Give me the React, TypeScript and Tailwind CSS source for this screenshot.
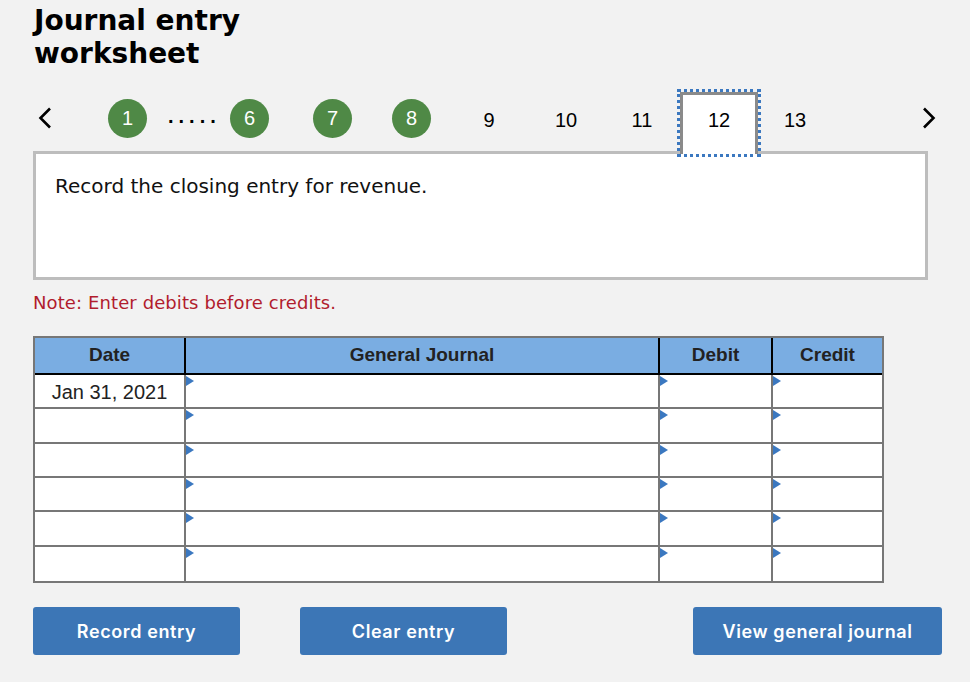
import React from 'react';

const Chevron = ({ dir }: { dir: 'left' | 'right' }) => (
  <svg width="14" height="22" viewBox="0 0 14 22" className="shrink-0">
    <polyline
      points={dir === 'left' ? '12,1.5 2.5,11 12,20.5' : '2,1.5 11.5,11 2,20.5'}
      fill="none"
      stroke="#000"
      strokeWidth="2.6"
    />
  </svg>
);

const Done = ({ n, className = '' }: { n: number; className?: string }) => (
  <div
    className={`w-[39px] h-[39px] shrink-0 rounded-full bg-[#4f8946] text-white flex items-center justify-center text-[20px] font-['Liberation_Sans',Arial,sans-serif] ${className}`}
  >
    {n}
  </div>
);

const Step = ({ n, className = '' }: { n: number; className?: string }) => (
  <div
    className={`w-[74px] shrink-0 pt-[3px] text-center text-[20px] text-black font-['Liberation_Sans',Arial,sans-serif] ${className}`}
  >
    {n}
  </div>
);

const Marker = () => (
  <span className="absolute left-0 top-[1px] w-0 h-0 border-y-[5px] border-y-transparent border-l-[8px] border-l-[#3b78c0]" />
);

const rows = ['Jan 31, 2021', '', '', '', '', ''];

export default function App() {
  return (
    <div className="min-h-[682px] w-[970px] bg-[#f2f2f2] px-[33px] pt-[4px] font-['DejaVu_Sans',Verdana,sans-serif]">
      <h1 className="text-[28px] leading-[33px] font-bold text-black pl-[1px]">
        Journal entry
        <br />
        worksheet
      </h1>

      {/* step navigation */}
      <div className="mt-[22px] mb-[7px] -ml-[33px] h-[52px] flex items-center">
        <div className="ml-[38px]">
          <Chevron dir="left" />
        </div>
        <Done n={1} className="ml-[56px]" />
        <div className="ml-[21px] w-[49px] shrink-0 text-[20px] font-bold tracking-[5px] leading-none pb-[4px] font-['Liberation_Sans',Arial,sans-serif]">
          .....
        </div>
        <Done n={6} className="ml-[13px]" />
        <Done n={7} className="ml-[44px]" />
        <Done n={8} className="ml-[40px]" />
        <Step n={9} className="ml-[21px]" />
        <Step n={10} className="ml-[3px]" />
        <Step n={11} className="ml-[2px]" />
        <div className="relative z-10 self-start ml-[1px] w-[78px] h-[62px] shrink-0 bg-white border-[3px] border-b-0 border-[#8a8a8a] outline-[3px] outline-dotted outline-[#3b78c0] pt-[10px] text-center text-[20px] text-black font-['Liberation_Sans',Arial,sans-serif]">
          12
        </div>
        <Step n={13} />
        <div className="ml-[90px]">
          <Chevron dir="right" />
        </div>
      </div>

      {/* prompt */}
      <div className="w-[895px] h-[129px] bg-white border-[3px] border-[#bdbdbd] pl-[19px] pt-[20px] text-[20px] leading-[24px] text-[#111]">
        Record the closing entry for revenue.
      </div>

      <p className="mt-[12px] text-[18px] tracking-[0.1px] leading-[22px] text-[#b11c2d]">Note: Enter debits before credits.</p>

      {/* journal table */}
      <div className="mt-[22px] w-[851px] border-2 border-[#777] bg-white font-['Liberation_Sans',Arial,sans-serif]">
        <div className="flex h-[37px] bg-[#7aade2] border-b-2 border-black text-[19px] font-bold text-[#222]">
          <div className="w-[149px] flex items-center justify-center">Date</div>
          <div className="w-[474px] border-l-2 border-black flex items-center justify-center">General Journal</div>
          <div className="w-[113px] border-l-2 border-black flex items-center justify-center">Debit</div>
          <div className="w-[111px] border-l-2 border-black flex items-center justify-center">Credit</div>
        </div>
        {rows.map((date, i) => (
          <div
            key={i}
            className={`flex h-[34.35px] ${i < rows.length - 1 ? 'border-b-2 border-[#777]' : ''}`}
          >
            <div className="w-[149px] flex items-center justify-center pt-[2px] text-[20px] text-[#222]">{date}</div>
            <div className="relative w-[474px] border-l-2 border-[#777]">
              <Marker />
            </div>
            <div className="relative w-[113px] border-l-2 border-[#777]">
              <Marker />
            </div>
            <div className="relative w-[111px] border-l-2 border-[#777]">
              <Marker />
            </div>
          </div>
        ))}
      </div>

      {/* actions */}
      <div className="mt-[24px] flex font-['Inter',sans-serif] text-[18px] font-semibold tracking-[0.6px] text-white">
        <button className="shrink-0 w-[207px] h-[48px] rounded-[3px] bg-[#3c76b6]">Record entry</button>
        <button className="shrink-0 ml-[60px] w-[207px] h-[48px] rounded-[3px] bg-[#3c76b6]">Clear entry</button>
        <button className="shrink-0 ml-[186px] w-[249px] h-[48px] rounded-[3px] bg-[#3c76b6]">View general journal</button>
      </div>
    </div>
  );
}
